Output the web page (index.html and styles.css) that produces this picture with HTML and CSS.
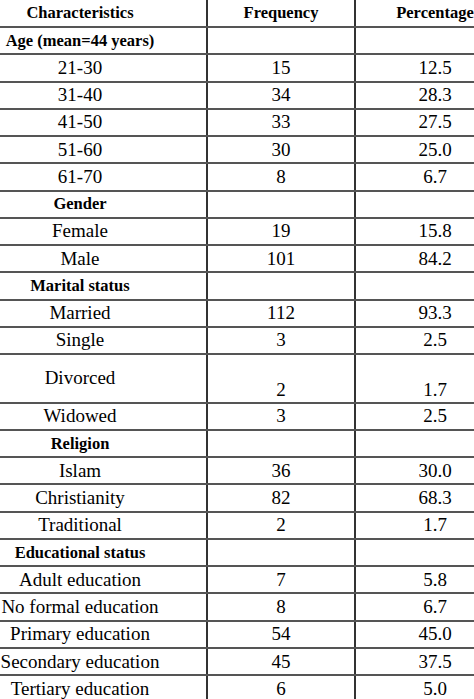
FILE: index.html
```html
<!DOCTYPE html>
<html>
<head>
<meta charset="utf-8">
<link rel="stylesheet" href="styles.css">
</head>
<body>
<table class="tbl">
  <colgroup>
    <col class="c1">
    <col class="c2">
    <col class="c3">
  </colgroup>
  <thead>
    <tr class="head"><th>Characteristics</th><th>Frequency</th><th>Percentage</th></tr>
  </thead>
  <tbody>
    <tr class="sec"><td>Age (mean=44 years)</td><td></td><td></td></tr>
    <tr><td>21-30</td><td>15</td><td>12.5</td></tr>
    <tr><td>31-40</td><td>34</td><td>28.3</td></tr>
    <tr><td>41-50</td><td>33</td><td>27.5</td></tr>
    <tr><td>51-60</td><td>30</td><td>25.0</td></tr>
    <tr><td>61-70</td><td>8</td><td>6.7</td></tr>
    <tr class="sec"><td>Gender</td><td></td><td></td></tr>
    <tr><td>Female</td><td>19</td><td>15.8</td></tr>
    <tr><td>Male</td><td>101</td><td>84.2</td></tr>
    <tr class="sec"><td>Marital status</td><td></td><td></td></tr>
    <tr><td>Married</td><td>112</td><td>93.3</td></tr>
    <tr><td>Single</td><td>3</td><td>2.5</td></tr>
    <tr class="tall"><td>Divorced</td><td class="low">2</td><td class="low">1.7</td></tr>
    <tr><td>Widowed</td><td>3</td><td>2.5</td></tr>
    <tr class="sec"><td>Religion</td><td></td><td></td></tr>
    <tr><td>Islam</td><td>36</td><td>30.0</td></tr>
    <tr><td>Christianity</td><td>82</td><td>68.3</td></tr>
    <tr><td>Traditional</td><td>2</td><td>1.7</td></tr>
    <tr class="sec"><td>Educational status</td><td></td><td></td></tr>
    <tr><td>Adult education</td><td>7</td><td>5.8</td></tr>
    <tr><td>No formal education</td><td>8</td><td>6.7</td></tr>
    <tr><td>Primary education</td><td>54</td><td>45.0</td></tr>
    <tr><td>Secondary education</td><td>45</td><td>37.5</td></tr>
    <tr><td>Tertiary education</td><td>6</td><td>5.0</td></tr>
  </tbody>
</table>
</body>
</html>
```

FILE: styles.css
```css
html, body {
  margin: 0;
  padding: 0;
  background: #ffffff;
  overflow: hidden;
}

.tbl {
  border-collapse: collapse;
  table-layout: fixed;
  width: 560px;
  margin-left: -46px;
  font-family: "Liberation Serif", "Times New Roman", serif;
  color: #000;
}

.c1 { width: 253px; }
.c2 { width: 148px; }
.c3 { width: 159px; }

.tbl th,
.tbl td {
  padding: 0;
  text-align: center;
  vertical-align: middle;
  white-space: nowrap;
  border-bottom: 2px solid #555;
  font-size: 19px;
  font-weight: normal;
  line-height: 20px;
}

.tbl th + th,
.tbl td + td {
  border-left: 2px solid #333;
}

.tbl tbody tr {
  height: 27.25px;
}

.head th {
  font-weight: bold;
  font-size: 16.5px;
  height: 25px;
  padding-bottom: 1px;
}

.sec td {
  font-weight: bold;
  font-size: 16.5px;
}

.tbl tr.tall {
  height: 48.7px;
}

.tbl td.low {
  vertical-align: bottom;
  padding-bottom: 2px;
}
```
